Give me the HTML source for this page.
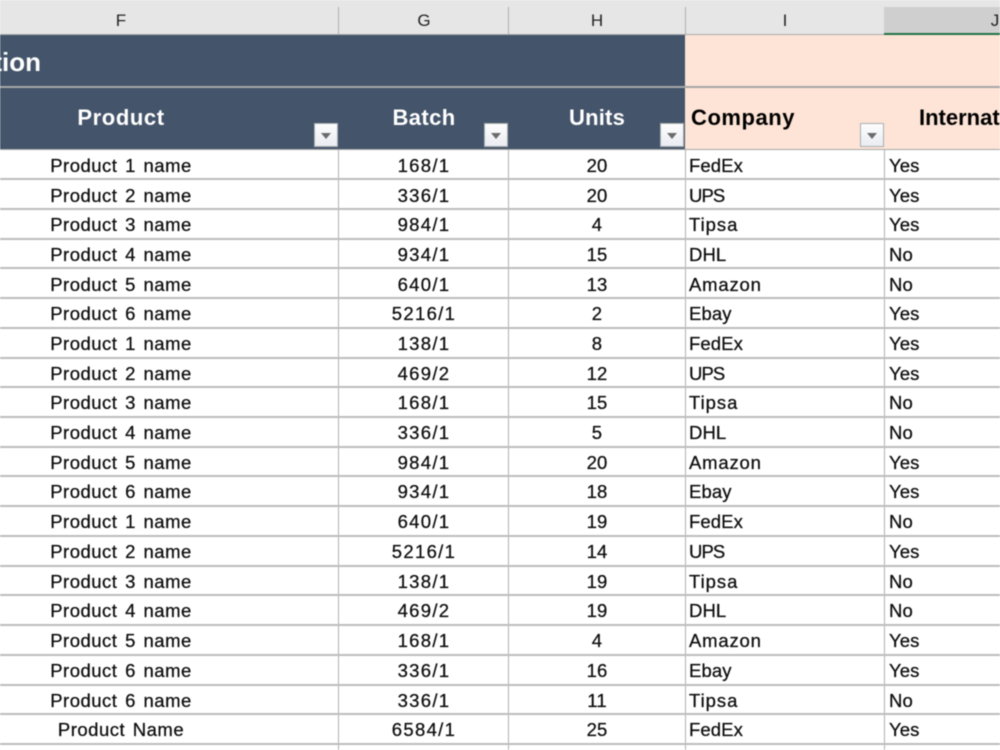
<!DOCTYPE html>
<html><head><meta charset="utf-8"><style>
html,body{margin:0;padding:0;background:#fff}
#p{position:relative;width:1000px;height:750px;overflow:hidden;background:#fff;font-family:"Liberation Sans",sans-serif;color:#0c0c0c;filter:blur(.45px)}
#p div{position:absolute}
.l{background:#b0b0b0;width:1px;height:600px;top:150px}
.r{background:#bdbdbd;left:0;width:1000px;height:2px}
.c{height:24px;line-height:24px;font-size:18.5px;text-align:center;white-space:nowrap;letter-spacing:.1px;-webkit-text-stroke:.25px #0c0c0c}
.prod{left:0;width:242px;letter-spacing:.5px;word-spacing:2px}
.g{left:339px;width:170px;letter-spacing:1.3px}
.h{left:509px;width:176px}
.i{left:689px;width:190px;text-align:left}
.j{left:889px;width:100px;text-align:left}
.am{letter-spacing:.8px}
.ti{letter-spacing:.95px}
.up{letter-spacing:-.9px}
.hd{height:26px;line-height:26px;font-size:22px;font-weight:bold;text-align:center;color:#fff;white-space:nowrap}
.ch{top:10px;height:22px;line-height:22px;font-size:17px;text-align:center;color:#222}
.b{width:22px;height:22px;top:123px;background:linear-gradient(#fdfdfd,#e9ecf2);border:1px solid #a9adb0;box-sizing:content-box}
.b::after{content:"";position:absolute;left:5.5px;top:8.5px;border-left:5.5px solid transparent;border-right:5.5px solid transparent;border-top:6px solid #6b6b6b}
</style></head><body><div id="p">
<div style="left:0;top:0;width:1000px;height:35px;background:#e6e6e6"></div>
<div style="left:884px;top:7px;width:116px;height:26px;background:#cfcfcf"></div>
<div style="left:0;top:34px;width:884px;height:1.5px;background:#aaa"></div>
<div style="left:884px;top:32.5px;width:116px;height:2.5px;background:#217346"></div>
<div class="l" style="left:338px;top:7px;height:27px"></div>
<div class="l" style="left:508px;top:7px;height:27px"></div>
<div class="l" style="left:685px;top:7px;height:27px"></div>
<div class="ch" style="left:0;width:242px">F</div>
<div class="ch" style="left:339px;width:170px">G</div>
<div class="ch" style="left:509px;width:176px">H</div>
<div class="ch" style="left:686px;width:198px">I</div>
<div class="ch" style="left:884px;width:222px">J</div>

<div style="left:0;top:35px;width:685px;height:114px;background:#44546a"></div>
<div style="left:685px;top:35px;width:315px;height:114px;background:#fde4d6"></div>
<div style="left:0;top:86px;width:1000px;height:1.5px;background:#a6a6a6"></div>
<div style="left:0;top:148.5px;width:1000px;height:1.5px;background:#a6a6a6"></div>
<div class="hd" style="left:-61px;top:48px;width:102px;font-size:26px;text-align:right;line-height:28px;height:28px">ation</div>
<div class="hd" style="left:0;top:105px;width:242px;letter-spacing:.6px">Product</div>
<div class="hd" style="left:339px;top:105px;width:170px;letter-spacing:.4px">Batch</div>
<div class="hd" style="left:509px;top:105px;width:176px;letter-spacing:.2px">Units</div>
<div class="hd" style="left:691px;top:105px;color:#000;text-align:left;letter-spacing:.55px">Company</div>
<div class="hd" style="left:919px;top:105px;color:#000;text-align:left">International</div>
<div class="b" style="left:314px"></div>
<div class="b" style="left:484px"></div>
<div class="b" style="left:660px"></div>
<div class="b" style="left:860px"></div>

<div class="l" style="left:338px"></div>
<div class="l" style="left:508px"></div>
<div class="l" style="left:685px"></div>
<div class="l" style="left:884px"></div>

<div class="r" style="top:178px"></div>
<div class="r" style="top:208px"></div>
<div class="r" style="top:238px"></div>
<div class="r" style="top:267px"></div>
<div class="r" style="top:297px"></div>
<div class="r" style="top:327px"></div>
<div class="r" style="top:357px"></div>
<div class="r" style="top:386px"></div>
<div class="r" style="top:416px"></div>
<div class="r" style="top:446px"></div>
<div class="r" style="top:475px"></div>
<div class="r" style="top:505px"></div>
<div class="r" style="top:535px"></div>
<div class="r" style="top:565px"></div>
<div class="r" style="top:594px"></div>
<div class="r" style="top:624px"></div>
<div class="r" style="top:654px"></div>
<div class="r" style="top:684px"></div>
<div class="r" style="top:713px"></div>
<div class="r" style="top:743px"></div>

<div class="c prod" style="top:154px">Product 1 name</div><div class="c g" style="top:154px">168/1</div><div class="c h" style="top:154px">20</div><div class="c i" style="top:154px">FedEx</div><div class="c j" style="top:154px">Yes</div>
<div class="c prod" style="top:184px">Product 2 name</div><div class="c g" style="top:184px">336/1</div><div class="c h" style="top:184px">20</div><div class="c i up" style="top:184px">UPS</div><div class="c j" style="top:184px">Yes</div>
<div class="c prod" style="top:213px">Product 3 name</div><div class="c g" style="top:213px">984/1</div><div class="c h" style="top:213px">4</div><div class="c i ti" style="top:213px">Tipsa</div><div class="c j" style="top:213px">Yes</div>
<div class="c prod" style="top:243px">Product 4 name</div><div class="c g" style="top:243px">934/1</div><div class="c h" style="top:243px">15</div><div class="c i" style="top:243px">DHL</div><div class="c j" style="top:243px">No</div>
<div class="c prod" style="top:273px">Product 5 name</div><div class="c g" style="top:273px">640/1</div><div class="c h" style="top:273px">13</div><div class="c i am" style="top:273px">Amazon</div><div class="c j" style="top:273px">No</div>
<div class="c prod" style="top:302px">Product 6 name</div><div class="c g" style="top:302px">5216/1</div><div class="c h" style="top:302px">2</div><div class="c i" style="top:302px">Ebay</div><div class="c j" style="top:302px">Yes</div>
<div class="c prod" style="top:332px">Product 1 name</div><div class="c g" style="top:332px">138/1</div><div class="c h" style="top:332px">8</div><div class="c i" style="top:332px">FedEx</div><div class="c j" style="top:332px">Yes</div>
<div class="c prod" style="top:362px">Product 2 name</div><div class="c g" style="top:362px">469/2</div><div class="c h" style="top:362px">12</div><div class="c i up" style="top:362px">UPS</div><div class="c j" style="top:362px">Yes</div>
<div class="c prod" style="top:391px">Product 3 name</div><div class="c g" style="top:391px">168/1</div><div class="c h" style="top:391px">15</div><div class="c i ti" style="top:391px">Tipsa</div><div class="c j" style="top:391px">No</div>
<div class="c prod" style="top:421px">Product 4 name</div><div class="c g" style="top:421px">336/1</div><div class="c h" style="top:421px">5</div><div class="c i" style="top:421px">DHL</div><div class="c j" style="top:421px">No</div>
<div class="c prod" style="top:451px">Product 5 name</div><div class="c g" style="top:451px">984/1</div><div class="c h" style="top:451px">20</div><div class="c i am" style="top:451px">Amazon</div><div class="c j" style="top:451px">Yes</div>
<div class="c prod" style="top:480px">Product 6 name</div><div class="c g" style="top:480px">934/1</div><div class="c h" style="top:480px">18</div><div class="c i" style="top:480px">Ebay</div><div class="c j" style="top:480px">Yes</div>
<div class="c prod" style="top:510px">Product 1 name</div><div class="c g" style="top:510px">640/1</div><div class="c h" style="top:510px">19</div><div class="c i" style="top:510px">FedEx</div><div class="c j" style="top:510px">No</div>
<div class="c prod" style="top:540px">Product 2 name</div><div class="c g" style="top:540px">5216/1</div><div class="c h" style="top:540px">14</div><div class="c i up" style="top:540px">UPS</div><div class="c j" style="top:540px">Yes</div>
<div class="c prod" style="top:570px">Product 3 name</div><div class="c g" style="top:570px">138/1</div><div class="c h" style="top:570px">19</div><div class="c i ti" style="top:570px">Tipsa</div><div class="c j" style="top:570px">No</div>
<div class="c prod" style="top:599px">Product 4 name</div><div class="c g" style="top:599px">469/2</div><div class="c h" style="top:599px">19</div><div class="c i" style="top:599px">DHL</div><div class="c j" style="top:599px">No</div>
<div class="c prod" style="top:629px">Product 5 name</div><div class="c g" style="top:629px">168/1</div><div class="c h" style="top:629px">4</div><div class="c i am" style="top:629px">Amazon</div><div class="c j" style="top:629px">Yes</div>
<div class="c prod" style="top:659px">Product 6 name</div><div class="c g" style="top:659px">336/1</div><div class="c h" style="top:659px">16</div><div class="c i" style="top:659px">Ebay</div><div class="c j" style="top:659px">Yes</div>
<div class="c prod" style="top:689px">Product 6 name</div><div class="c g" style="top:689px">336/1</div><div class="c h" style="top:689px">11</div><div class="c i ti" style="top:689px">Tipsa</div><div class="c j" style="top:689px">No</div>
<div class="c prod" style="top:718px">Product Name</div><div class="c g" style="top:718px">6584/1</div><div class="c h" style="top:718px">25</div><div class="c i" style="top:718px">FedEx</div><div class="c j" style="top:718px">Yes</div>
</div></body></html>
